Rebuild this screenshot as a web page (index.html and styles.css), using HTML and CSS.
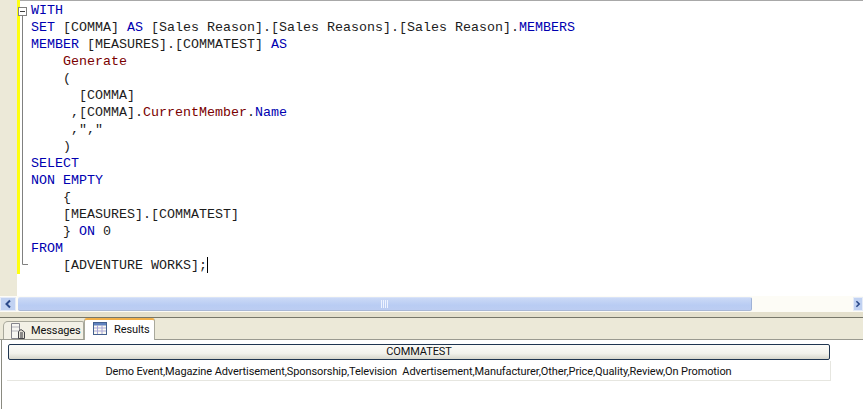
FILE: index.html
```html
<!DOCTYPE html>
<html>
<head>
<meta charset="utf-8">
<title>MDX query</title>
<link rel="stylesheet" href="styles.css">
</head>
<body>
<div class="editor">
  <div class="gutter"></div>
  <div class="changebar"></div>
  <svg class="fold" width="11" height="296" viewBox="0 0 11 296">
    <path d="M4.500 15V264.500H10" fill="none" stroke="#808080"/>
    <rect x="0.500" y="7.500" width="8" height="8" fill="#fff" stroke="#808080"/>
    <path d="M2 11.500H7" stroke="#404040"/>
  </svg>
  <pre class="code"><b>WITH</b>
<b>SET</b> [COMMA] <b>AS</b> [Sales Reason].[Sales Reasons].[Sales Reason].<b>MEMBERS</b>
<b>MEMBER</b> [MEASURES].[COMMATEST] <b>AS</b>
    <i>Generate</i>
    (
      [COMMA]
     ,[COMMA].<i>CurrentMember</i>.<b>Name</b>
     ,","
    )
<b>SELECT</b>
<b>NON EMPTY</b>
    {
    [MEASURES].[COMMATEST]
    } <b>ON</b> 0
<b>FROM</b>
    [ADVENTURE WORKS];<span class="caret"></span></pre>
</div>
<div class="hscroll">
  <div class="sbtn">
    <svg width="10" height="10" viewBox="0 0 10 10"><path d="M7 1.500L3.500 5L7 8.500" fill="none" stroke="#2b4a8a" stroke-width="2"/></svg>
  </div>
  <div class="thumb">
    <svg width="10" height="8" viewBox="0 0 10 8"><path d="M1.500 0V8M3.500 0V8M5.500 0V8M7.500 0V8" stroke="#eef3ff"/></svg>
  </div>
  <div class="track"></div>
  <div class="sbtn sbtn-r">
    <svg width="10" height="10" viewBox="0 0 10 10"><path d="M3 1.500L6.500 5L3 8.500" fill="none" stroke="#2b4a8a" stroke-width="2"/></svg>
  </div>
</div>
<div class="splitter"></div>
<div class="tabs">
  <div class="tab">
    <svg width="15" height="16" viewBox="0 0 15 16">
      <path d="M.5.500H8.500V15.500H.5Z" fill="#f6f6f2" stroke="#85858c"/>
      <path d="M1 4H8M1 8H8" stroke="#b5b5bc"/>
      <path d="M7.500 8.500L10 6.500L13.500 9V15.500H7.500Z" fill="#e4e2d8" stroke="#44444a"/>
      <path d="M9 10H12M9 12H12M9 14H12" stroke="#33333a"/>
    </svg>
    <span>Messages</span>
  </div>
  <div class="tab tab-on">
    <svg width="14" height="14" viewBox="0 0 14 14">
      <rect x=".5" y=".5" width="13" height="12" fill="#fbfaf0" stroke="#44608f"/>
      <path d="M1 1H13V3.500H1Z" fill="#5f82bf"/>
      <path d="M4.500 3V12M9 3V12M1 6H13M1 9H13" stroke="#a8a6d8"/>
    </svg>
    <span>Results</span>
  </div>
</div>
<div class="results">
  <div class="grid">
    <div class="head">COMMATEST</div>
    <div class="cell">Demo Event,Magazine Advertisement,Sponsorship,Television&nbsp; Advertisement,Manufacturer,Other,Price,Quality,Review,On Promotion</div>
  </div>
</div>
</body>
</html>
```
FILE: styles.css
```css
html, body { margin: 0; padding: 0; }
body {
  width: 863px;
  height: 409px;
  overflow: hidden;
  background: #fff;
  font-family: Roboto, "Liberation Sans", sans-serif;
}
.editor {
  display: flex;
  height: 296px;
  background: #fff;
  box-shadow: inset 0 1px 0 #a8a8a8;
}
.gutter { width: 17px; flex: none; background: #ece9d8; }
.changebar { width: 3px; flex: none; height: 274px; background: #ffff10; }
.fold { flex: none; margin-left: -2px; margin-right: 2px; }
.code {
  margin: 2px 0 0 0;
  font-family: "Liberation Mono", "Courier New", monospace;
  font-size: 13.3333px;
  line-height: 17px;
  color: #1c1c1c;
}
.code b { font-weight: normal; color: #0000b0; }
.code i { font-style: normal; color: #7a0000; }
.caret {
  display: inline-block;
  width: 1px;
  height: 16px;
  background: #000;
  vertical-align: -4px;
}
.hscroll {
  display: flex;
  height: 16px;
  padding: 1px 0 1px;
  box-sizing: border-box;
  background: #fdfcf6;
}
.sbtn {
  width: 16px;
  flex: none;
  margin-right: 2px;
  display: flex;
  align-items: center;
  justify-content: center;
  background: #c1d2f2;
  border: 1px solid #e6ecf8;
  box-sizing: border-box;
}
.sbtn-r { width: 10px; margin: 0; justify-content: flex-start; }
.thumb {
  width: 734px;
  flex: none;
  display: flex;
  align-items: center;
  justify-content: center;
  background: linear-gradient(#cbd9f6, #b9ccf3 60%, #bccdf2);
  border-top: 1px solid #d9e3f8;
  border-bottom: 1px solid #a9b8d6;
  border-right: 1px solid #9fb2d6;
  box-sizing: border-box;
  border-radius: 2px;
}
.track { flex: 1; }
.splitter {
  height: 6px;
  background: #e4e0cd;
  border-bottom: 1px solid #77776a;
  box-sizing: border-box;
}
.tabs {
  display: flex;
  align-items: flex-end;
  height: 22px;
  padding-left: 3px;
  background: #ece9d8;
  border-bottom: 1px solid #9a9a90;
  box-sizing: border-box;
  font-size: 11px;
  letter-spacing: -0.1px;
  color: #111;
}
.tab {
  display: flex;
  align-items: center;
  gap: 5px;
  width: 81px;
  height: 18px;
  padding-left: 7px;
  box-sizing: border-box;
  background: #f3f1e6;
  border: 1px solid #a9a99c;
  border-bottom: none;
  border-radius: 5px 2px 0 0;
}
.tab-on {
  width: 71px;
  height: 22px;
  margin-bottom: -1px;
  padding: 0 0 2px 8px;
  gap: 7px;
  background: #fff;
  border-top: 2px solid #f1b04a;
  border-radius: 3px 3px 0 0;
}
.results {
  height: 69px;
  margin-left: 1px;
  padding: 4px 0 0 5px;
  border-left: 1px solid #8a8a80;
  box-sizing: border-box;
  background: #fff;
  font-size: 11px;
  letter-spacing: -0.1px;
  color: #111;
}
.grid { width: 824px; }
.head {
  height: 16px;
  margin: 0 1px 1px 1px;
  line-height: 14px;
  text-align: center;
  box-sizing: border-box;
  border: 1px solid #1f3550;
  border-radius: 2px;
  background: linear-gradient(#fbfbf8, #f2f2ec 60%, #d6d6cc);
}
.cell {
  height: 20px;
  line-height: 21px;
  text-align: center;
  box-sizing: border-box;
  border-bottom: 1px solid #e6e6e0;
  border-right: 1px solid #e6e6e0;
}
```
